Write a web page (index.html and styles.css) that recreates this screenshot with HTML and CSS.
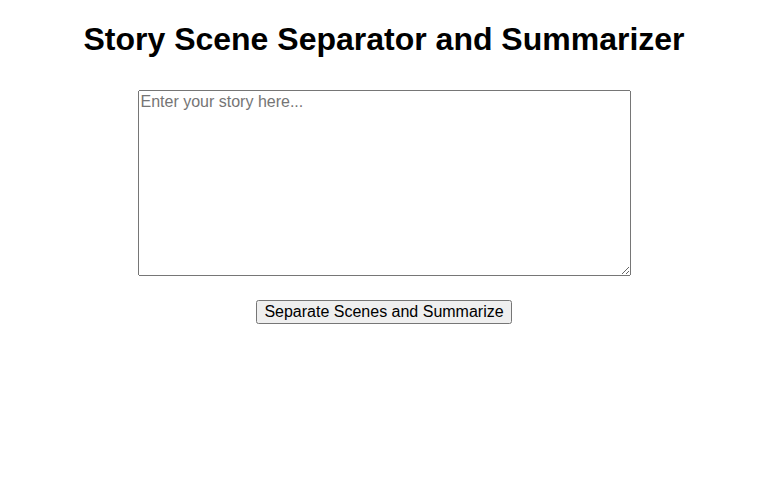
FILE: index.html
```html
<!DOCTYPE html>
<html>
<head>
<meta charset="utf-8">
<link rel="stylesheet" href="styles.css">
</head>
<body>
<main class="app">
  <h1 class="title">Story Scene Separator and Summarizer</h1>
  <textarea class="story" placeholder="Enter your story here..."></textarea>
  <button class="submit">Separate Scenes and Summarize</button>
</main>
</body>
</html>
```
FILE: styles.css
```css
body {
  margin: 0;
  font-family: "Liberation Sans", Arial, sans-serif;
  background: #fff;
}
.app {
  display: flex;
  flex-direction: column;
  align-items: center;
  padding-top: 21px;
}
.title {
  font-size: 32px;
  font-weight: bold;
  margin: 0 0 32px;
  color: #000;
}
.story {
  box-sizing: border-box;
  width: 493px;
  height: 186px;
  font-family: "Liberation Sans", Arial, sans-serif;
  font-size: 16px;
  margin: 0 0 24px;
}
.submit {
  font-family: "Liberation Sans", Arial, sans-serif;
  font-size: 16px;
}
```
